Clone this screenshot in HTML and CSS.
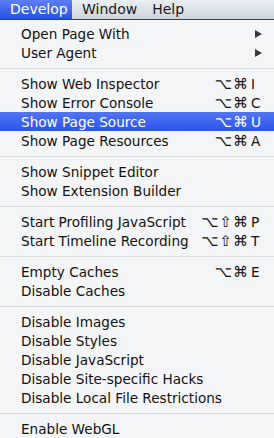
FILE: index.html
```html
<!DOCTYPE html>
<html lang="en">
<head>
  <meta charset="UTF-8" />
  <title>Develop menu</title>
  <link rel="stylesheet" href="styles.css">
</head>
<body>

<!-- top menu bar -->
<nav class="menubar">
  <span class="bar-item open">Develop</span>
  <span class="bar-item">Window</span>
  <span class="bar-item">Help</span>
</nav>

<!-- the dropped-down menu -->
<ul class="menu">
  <li class="item"><span class="label">Open Page With</span><span class="arrow"></span></li>
  <li class="item"><span class="label">User Agent</span><span class="arrow"></span></li>
  <li class="sep"></li>
  <li class="item"><span class="label">Show Web Inspector</span><span class="mods">⌥⌘</span><span class="key">I</span></li>
  <li class="item"><span class="label">Show Error Console</span><span class="mods">⌥⌘</span><span class="key">C</span></li>
  <li class="item selected"><span class="label">Show Page Source</span><span class="mods">⌥⌘</span><span class="key">U</span></li>
  <li class="item"><span class="label">Show Page Resources</span><span class="mods">⌥⌘</span><span class="key">A</span></li>
  <li class="sep"></li>
  <li class="item"><span class="label">Show Snippet Editor</span></li>
  <li class="item"><span class="label">Show Extension Builder</span></li>
  <li class="sep"></li>
  <li class="item"><span class="label">Start Profiling JavaScript</span><span class="mods">⌥⇧⌘</span><span class="key">P</span></li>
  <li class="item"><span class="label">Start Timeline Recording</span><span class="mods">⌥⇧⌘</span><span class="key">T</span></li>
  <li class="sep"></li>
  <li class="item"><span class="label">Empty Caches</span><span class="mods">⌥⌘</span><span class="key">E</span></li>
  <li class="item"><span class="label">Disable Caches</span></li>
  <li class="sep"></li>
  <li class="item"><span class="label">Disable Images</span></li>
  <li class="item"><span class="label">Disable Styles</span></li>
  <li class="item"><span class="label">Disable JavaScript</span></li>
  <li class="item"><span class="label">Disable Site-specific Hacks</span></li>
  <li class="item"><span class="label">Disable Local File Restrictions</span></li>
  <li class="sep"></li>
  <li class="item"><span class="label">Enable WebGL</span></li>
</ul>

</body>
</html>
```

FILE: styles.css
```css
*       { box-sizing:border-box; margin:0; padding:0; }
body    { font-family:'DejaVu Sans',sans-serif; font-size:13.6px; color:#111;
          background:#f4f5f6; width:274px; overflow:hidden; }

/* menu bar */
.menubar { display:flex; height:20px; border-bottom:1px solid #3c3f44;
           background:linear-gradient(#e9eef2, #cdd5dc); font-size:14px; }
.bar-item { line-height:19px; color:#1a1a1a; }
.bar-item.open { width:72px; padding-left:10px; color:#fff;
                 background:linear-gradient(#5d7ff5, #2451e6); }
.bar-item + .bar-item { padding:0 9px; }
.bar-item.open + .bar-item { padding:0 6px 0 10px; }

/* dropdown */
.menu   { list-style:none; padding-top:4px; background:#f4f5f6; }
.item   { display:flex; align-items:center; height:19px; padding:0 12px 0 21px; }
.label  { flex:1; white-space:nowrap; }
.mods   { text-align:right; margin-right:2px; font-size:15px; letter-spacing:1px; }
.key    { width:11px; }
.arrow  { width:0; height:0;
          border-top:4px solid transparent; border-bottom:4px solid transparent;
          border-left:7px solid #3a3a3a; }
.selected { color:#fff; background:linear-gradient(#5374f3, #2a55ea); }
.sep    { height:1px; margin:6px 0 5px; background:#d8dadc; }
```
